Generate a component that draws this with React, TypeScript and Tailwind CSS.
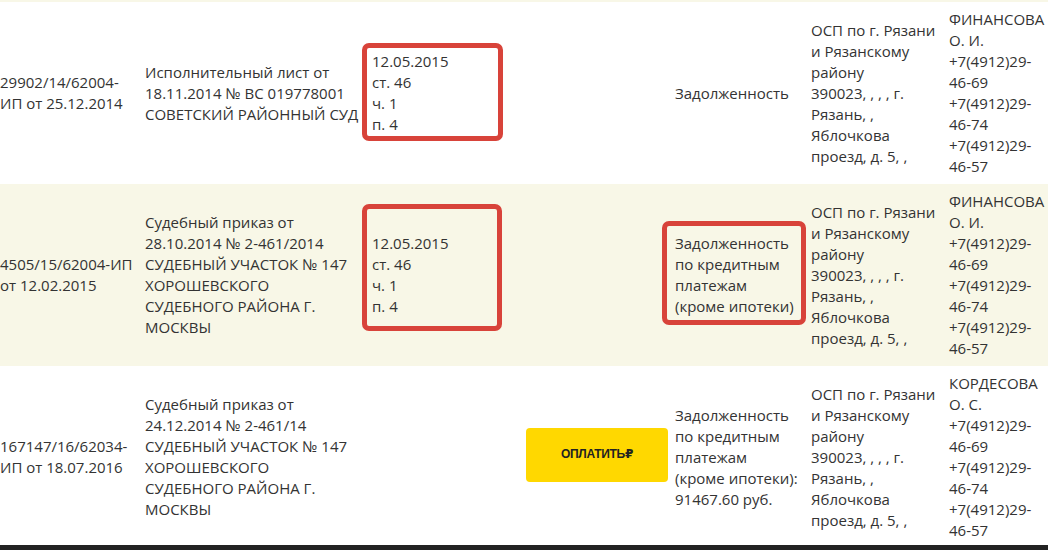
import React from "react";

type Row = {
  num: string[];
  doc: string[];
  end: string[];
  pay: boolean;
  subject: string[];
  dept: string[];
  officer: string[];
  bg: string;
  last?: boolean;
};

const dept = [
  "ОСП по г. Рязани",
  "и Рязанскому",
  "району",
  "390023, , , , г.",
  "Рязань, ,",
  "Яблочкова",
  "проезд, д. 5, ,",
];

const phones = [
  "+7(4912)29-",
  "46-69",
  "+7(4912)29-",
  "46-74",
  "+7(4912)29-",
  "46-57",
];

const rows: Row[] = [
  {
    num: ["29902/14/62004-", "ИП от 25.12.2014"],
    doc: [
      "Исполнительный лист от",
      "18.11.2014 № ВС 019778001",
      "СОВЕТСКИЙ РАЙОННЫЙ СУД",
    ],
    end: ["12.05.2015", "ст. 46", "ч. 1", "п. 4"],
    pay: false,
    subject: ["Задолженность"],
    dept,
    officer: ["ФИНАНСОВА", "О. И.", ...phones],
    bg: "bg-white",
  },
  {
    num: ["4505/15/62004-ИП", "от 12.02.2015"],
    doc: [
      "Судебный приказ от",
      "28.10.2014 № 2-461/2014",
      "СУДЕБНЫЙ УЧАСТОК № 147",
      "ХОРОШЕВСКОГО",
      "СУДЕБНОГО РАЙОНА Г.",
      "МОСКВЫ",
    ],
    end: ["12.05.2015", "ст. 46", "ч. 1", "п. 4"],
    pay: false,
    subject: ["Задолженность", "по кредитным", "платежам", "(кроме ипотеки)"],
    dept,
    officer: ["ФИНАНСОВА", "О. И.", ...phones],
    bg: "bg-[#f8f7e7]",
  },
  {
    num: ["167147/16/62034-", "ИП от 18.07.2016"],
    doc: [
      "Судебный приказ от",
      "24.12.2014 № 2-461/14",
      "СУДЕБНЫЙ УЧАСТОК № 147",
      "ХОРОШЕВСКОГО",
      "СУДЕБНОГО РАЙОНА Г.",
      "МОСКВЫ",
    ],
    end: [],
    pay: true,
    subject: [
      "Задолженность",
      "по кредитным",
      "платежам",
      "(кроме ипотеки):",
      "91467.60 руб.",
    ],
    dept,
    officer: ["КОРДЕСОВА", "О. С.", ...phones],
    bg: "bg-white",
    last: true,
  },
];

function Lines({ lines }: { lines: string[] }) {
  return (
    <div className="whitespace-nowrap">
      {lines.map((l, i) => (
        <div key={i}>{l}</div>
      ))}
    </div>
  );
}

function Cell({ children, first }: { children: React.ReactNode; first?: boolean }) {
  return (
    <div className={`flex items-center overflow-visible ${first ? "pl-0" : "pl-[7px]"}`}>
      {children}
    </div>
  );
}

export default function App() {
  return (
    <div
      className="relative h-[550px] w-[1048px] overflow-hidden bg-white text-[15px] leading-[21px] text-[#333]"
      style={{ fontFamily: '"Open Sans", "DejaVu Sans", sans-serif' }}
    >
      <div className="h-[2px] bg-[#f8f7e7]" />
      {rows.map((r, i) => (
        <div
          key={i}
          className={`grid grid-cols-[138px_227px_154px_149px_136px_138px_106px] pt-[7px] ${
            r.last ? "pb-[4px]" : "pb-[7px]"
          } ${r.bg}`}
        >
          <Cell first>
            <Lines lines={r.num} />
          </Cell>
          <Cell>
            <Lines lines={r.doc} />
          </Cell>
          <Cell>
            <Lines lines={r.end} />
          </Cell>
          <Cell>
            {r.pay && (
              <button
                className="mb-[5px] flex h-[54px] w-[142px] items-center justify-center rounded-[4px] bg-[#ffd800] text-[12px] font-bold tracking-[-0.3px] text-[#222]"
                style={{ fontFamily: '"Liberation Sans", "DejaVu Sans", sans-serif' }}
              >
                ОПЛАТИТЬ<span style={{ fontFamily: '"DejaVu Sans", sans-serif' }}>₽</span>
              </button>
            )}
          </Cell>
          <Cell>
            <Lines lines={r.subject} />
          </Cell>
          <Cell>
            <Lines lines={r.dept} />
          </Cell>
          <Cell>
            <Lines lines={r.officer} />
          </Cell>
        </div>
      ))}
      <div className="h-[5px] bg-[#222]" />

      {/* red highlight marks */}
      <div className="absolute left-[362px] top-[43px] h-[98px] w-[141px] rounded-[7px] border-[5px] border-[#d8433a]" />
      <div className="absolute left-[362px] top-[204px] h-[127px] w-[140px] rounded-[7px] border-[5px] border-[#d8433a]" />
      <div className="absolute left-[662px] top-[221px] h-[104px] w-[144px] rounded-[7px] border-[5px] border-[#d8433a]" />
    </div>
  );
}
